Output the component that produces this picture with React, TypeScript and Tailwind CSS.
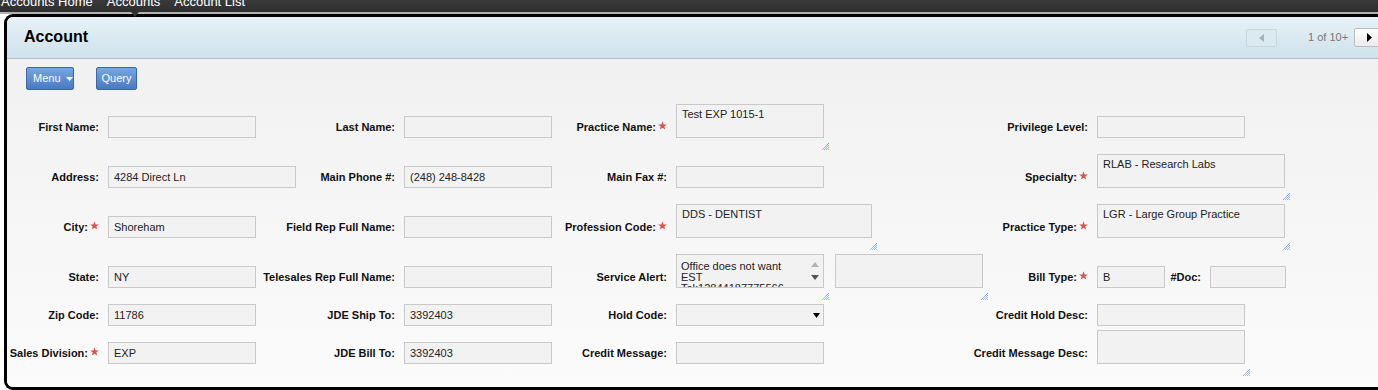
import React from "react";

function Star() {
  return (
    <svg width="9" height="9" viewBox="0 0 10 10" className="ml-[2px] self-start mt-[5px] shrink-0">
      <path d="M5 0.4 L6.25 3.75 L9.8 3.85 L7 6.05 L8 9.5 L5 7.45 L2 9.5 L3 6.05 L0.2 3.85 L3.75 3.75 Z" fill="#d9534f" />
    </svg>
  );
}

function Lbl({ text, star, w }: { text: string; star?: boolean; w: string }) {
  return (
    <div className={"flex h-[22px] shrink-0 items-center justify-end pr-[9px] text-[11px] font-bold text-[#111] whitespace-nowrap " + w}>
      <span>{text}</span>
      {star && <Star />}
    </div>
  );
}

function Inp({ w, value }: { w: string; value?: string }) {
  return (
    <input
      readOnly
      value={value ?? ""}
      className={"block h-[22px] shrink-0 border border-[#c9c9c9] bg-[#f2f2f2] px-[5px] text-[11px] text-[#222] outline-none " + w}
    />
  );
}

function Grip() {
  return (
    <svg width="8" height="7" viewBox="0 0 8 7" className="absolute -right-[6px] -bottom-[12px]">
      <path d="M0.5 6.5L7 0M2.5 6.5L7 2M4.5 6.5L7 4M6.5 6.5L7 6" stroke="#3d7fd1" strokeWidth="1" strokeDasharray="1 0.6" fill="none" />
    </svg>
  );
}

function TA({ w, value }: { w: string; value?: string }) {
  return (
    <div className={"relative shrink-0 " + w}>
      <textarea
        readOnly
        value={value ?? ""}
        className="block h-[34px] w-full resize-none overflow-hidden border border-[#c9c9c9] bg-[#f2f2f2] px-[5px] pt-[3px] text-[11px] leading-[13px] text-[#222] outline-none"
      />
      <Grip />
    </div>
  );
}

function Row({ h, children }: { h: string; children: React.ReactNode }) {
  return <div className={"flex items-end " + h}>{children}</div>;
}

function Cell({ w, children }: { w: string; children?: React.ReactNode }) {
  return <div className={"flex shrink-0 items-end " + w}>{children}</div>;
}

export default function App() {
  return (
    <div className="relative h-[390px] w-[1378px] overflow-hidden bg-white font-['Liberation_Sans',Arial,sans-serif]">
      {/* top nav */}
      <div className="h-[12px] overflow-hidden bg-[linear-gradient(#3a3a3a,#2e2e2e)]">
        <div className="-mt-[6px] flex gap-[14px] pl-[1px] text-[13px] leading-[15px] text-white">
          <span>Accounts Home</span>
          <span>Accounts</span>
          <span>Account List</span>
        </div>
      </div>
      <div className="h-[2px] bg-[#b3b3b3]" />
      <div className="absolute left-[131px] top-[12px] h-0 w-0 border-x-[4px] border-t-[5px] border-x-transparent border-t-[#333]" />

      {/* panel */}
      <div className="ml-[4px] flex h-[376px] w-[1400px] flex-col overflow-hidden rounded-l-[9px] border-[3px] border-r-0 border-black">
        {/* header */}
        <div className="flex h-[42px] shrink-0 items-center border-b border-[#b3bcc1] bg-[linear-gradient(#e6f1f7,#d0e2eb)]">
          <div className="-mt-[1px] w-[1239px] pl-[17px] text-[16px] font-bold text-black">Account</div>
          <div className="flex h-[18px] w-[31px] items-center justify-center rounded-[2px] border border-[#c6d7e0] bg-[#dbe9f0]">
            <svg width="5" height="8" viewBox="0 0 5 8"><path d="M5 0L0 4L5 8Z" fill="#a3b2ba" /></svg>
          </div>
          <div className="ml-[31px] text-[11px] text-[#777]">1 of 10+</div>
          <div className="ml-[6px] flex h-[19px] w-[32px] items-center justify-start rounded-[2px] border border-[#bdbdbd] bg-[linear-gradient(#fdfdfd,#ebebeb)] pl-[12px]">
            <svg width="5" height="9" viewBox="0 0 5 9"><path d="M0 0L5 4.5L0 9Z" fill="#000" /></svg>
          </div>
        </div>

        {/* body */}
        <div className="flex-1 bg-[linear-gradient(#f1f1f1,#fbfbfb)]">
          <div className="flex gap-[22px] pl-[19px] pt-[8px]">
            <div className="flex h-[23px] w-[48px] items-center rounded-[2px] border border-[#3b67a8] bg-[linear-gradient(#77a6e4,#4a79c3)] pl-[6px] text-[11px] text-white">
              <span>Menu</span>
              <svg width="7" height="4" viewBox="0 0 7 4" className="ml-[5px]"><path d="M0 0H7L3.5 4Z" fill="#fff" /></svg>
            </div>
            <div className="flex h-[23px] w-[41px] items-center justify-center rounded-[2px] border border-[#3b67a8] bg-[linear-gradient(#77a6e4,#4a79c3)] text-[11px] text-white">
              Query
            </div>
          </div>

          <div className="mt-[11px] flex flex-col">
            {/* row 1 */}
            <Row h="h-[37px]">
              <Lbl w="w-[101px]" text="First Name:" />
              <Cell w="w-[155px]"><Inp w="w-[148px]" /></Cell>
              <Lbl w="w-[141px]" text="Last Name:" />
              <Cell w="w-[152px]"><Inp w="w-[148px]" /></Cell>
              <Lbl w="w-[120px]" text="Practice Name:" star />
              <Cell w="w-[294px]"><TA w="w-[148px]" value="Test EXP 1015-1" /></Cell>
              <Lbl w="w-[127px]" text="Privilege Level:" />
              <Cell w="w-[200px]"><Inp w="w-[148px]" /></Cell>
            </Row>
            {/* row 2 */}
            <Row h="h-[50px]">
              <Lbl w="w-[101px]" text="Address:" />
              <Cell w="w-[155px]"><Inp w="w-[188px]" value="4284 Direct Ln" /></Cell>
              <Lbl w="w-[141px]" text="Main Phone #:" />
              <Cell w="w-[152px]"><Inp w="w-[148px]" value="(248) 248-8428" /></Cell>
              <Lbl w="w-[120px]" text="Main Fax #:" />
              <Cell w="w-[294px]"><Inp w="w-[148px]" /></Cell>
              <Lbl w="w-[127px]" text="Specialty:" star />
              <Cell w="w-[200px]"><TA w="w-[188px]" value="RLAB - Research Labs" /></Cell>
            </Row>
            {/* row 3 */}
            <Row h="h-[50px]">
              <Lbl w="w-[101px]" text="City:" star />
              <Cell w="w-[155px]"><Inp w="w-[148px]" value="Shoreham" /></Cell>
              <Lbl w="w-[141px]" text="Field Rep Full Name:" />
              <Cell w="w-[152px]"><Inp w="w-[148px]" /></Cell>
              <Lbl w="w-[120px]" text="Profession Code:" star />
              <Cell w="w-[294px]"><TA w="w-[196px]" value="DDS - DENTIST" /></Cell>
              <Lbl w="w-[127px]" text="Practice Type:" star />
              <Cell w="w-[200px]"><TA w="w-[188px]" value="LGR - Large Group Practice" /></Cell>
            </Row>
            {/* row 4 */}
            <Row h="h-[50px]">
              <Lbl w="w-[101px]" text="State:" />
              <Cell w="w-[155px]"><Inp w="w-[148px]" value="NY" /></Cell>
              <Lbl w="w-[141px]" text="Telesales Rep Full Name:" />
              <Cell w="w-[152px]"><Inp w="w-[148px]" /></Cell>
              <Lbl w="w-[120px]" text="Service Alert:" />
              <Cell w="w-[294px]">
                <div className="relative w-[148px] shrink-0">
                  <div className="h-[34px] overflow-hidden border border-[#c9c9c9] bg-[#f2f2f2] pl-[4px] pr-[16px] pt-[6px] text-[11px] leading-[11px] text-[#222]">
                    <div>Office does not want</div>
                    <div>EST</div>
                    <div>Tel:12844187775566</div>
                  </div>
                  <svg width="8" height="5" viewBox="0 0 8 5" className="absolute right-[5px] top-[8px]"><path d="M0 5H8L4 0Z" fill="#b3b3b3" /></svg>
                  <svg width="8" height="5" viewBox="0 0 8 5" className="absolute right-[5px] top-[21px]"><path d="M0 0H8L4 5Z" fill="#555" /></svg>
                  <Grip />
                </div>
                <div className="ml-[11px]"><TA w="w-[148px]" /></div>
              </Cell>
              <Lbl w="w-[127px]" text="Bill Type:" star />
              <Cell w="w-[200px]">
                <Inp w="w-[68px]" value="B" />
                <Lbl w="w-[45px]" text="#Doc:" />
                <Inp w="w-[76px]" />
              </Cell>
            </Row>
            {/* row 5 */}
            <Row h="h-[38px]">
              <Lbl w="w-[101px]" text="Zip Code:" />
              <Cell w="w-[155px]"><Inp w="w-[148px]" value="11786" /></Cell>
              <Lbl w="w-[141px]" text="JDE Ship To:" />
              <Cell w="w-[152px]"><Inp w="w-[148px]" value="3392403" /></Cell>
              <Lbl w="w-[120px]" text="Hold Code:" />
              <Cell w="w-[294px]">
                <div className="flex h-[22px] w-[148px] shrink-0 items-center justify-end border border-[#c9c9c9] bg-[#f2f2f2] pr-[3px]">
                  <svg width="7" height="5" viewBox="0 0 7 5"><path d="M0 0H7L3.5 5Z" fill="#000" /></svg>
                </div>
              </Cell>
              <Lbl w="w-[127px]" text="Credit Hold Desc:" />
              <Cell w="w-[200px]"><Inp w="w-[148px]" /></Cell>
            </Row>
            {/* row 6 */}
            <Row h="h-[38px]">
              <Lbl w="w-[101px]" text="Sales Division:" star />
              <Cell w="w-[155px]"><Inp w="w-[148px]" value="EXP" /></Cell>
              <Lbl w="w-[141px]" text="JDE Bill To:" />
              <Cell w="w-[152px]"><Inp w="w-[148px]" value="3392403" /></Cell>
              <Lbl w="w-[120px]" text="Credit Message:" />
              <Cell w="w-[294px]"><Inp w="w-[148px]" /></Cell>
              <Lbl w="w-[127px]" text="Credit Message Desc:" />
              <Cell w="w-[200px]"><TA w="w-[148px]" /></Cell>
            </Row>
          </div>
        </div>
      </div>
    </div>
  );
}
